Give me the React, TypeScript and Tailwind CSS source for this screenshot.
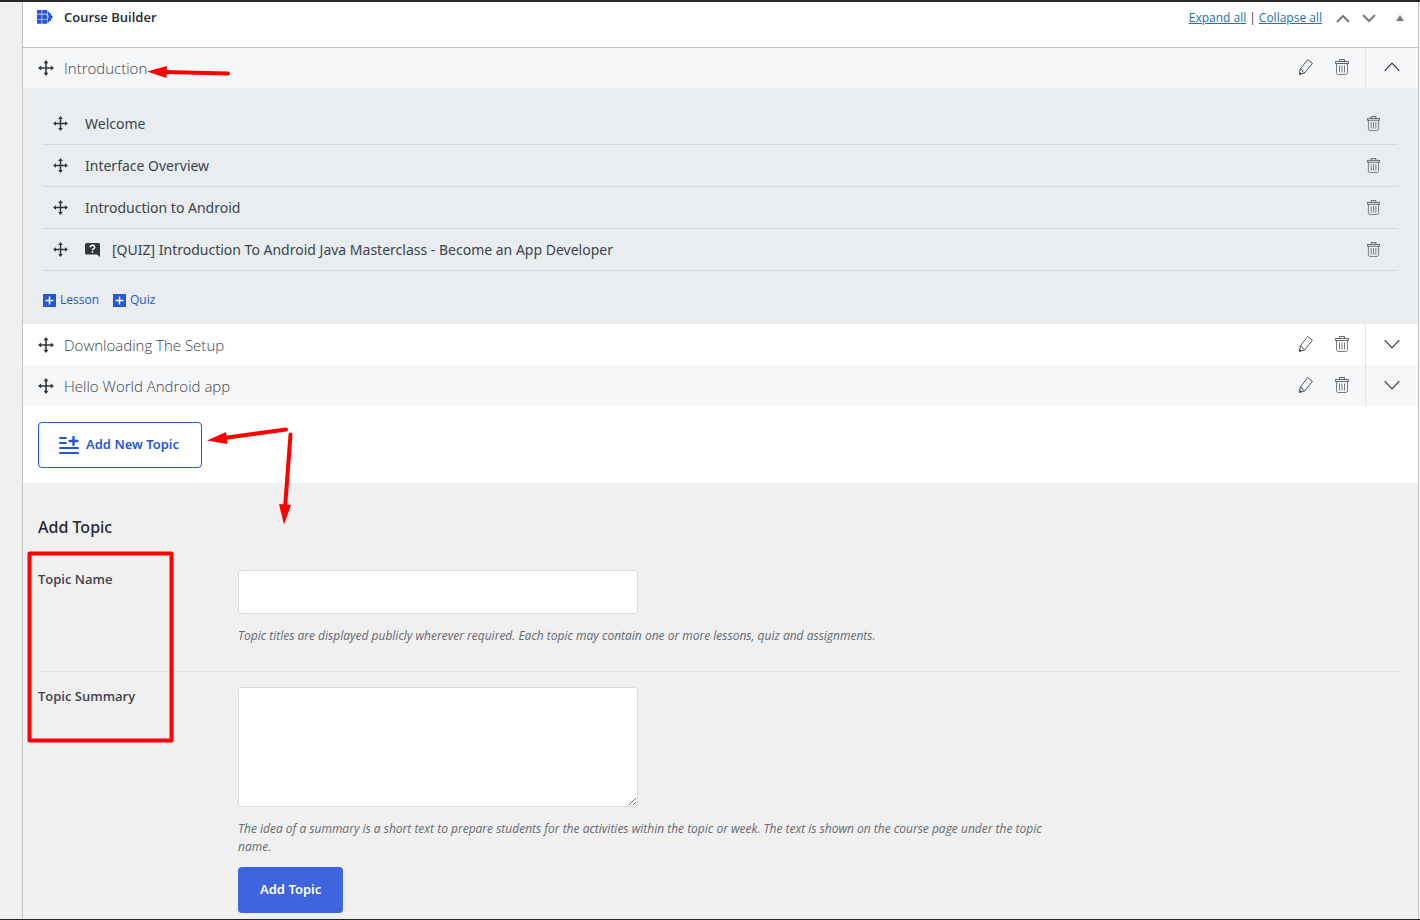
import React from "react";

type IconProps = { className?: string };

function MoveIcon({ className }: IconProps) {
  return (
    <svg viewBox="0 0 16 16" className={className} fill="currentColor" aria-hidden="true">
      <path d="M7.2 2h1.6v12H7.2zM2 7.2h12v1.6H2z" />
      <path d="M8 0l2.5 3.2h-5zM8 16l-2.5-3.2h5zM0 8l3.2-2.5v5zM16 8l-3.2 2.5v-5z" />
    </svg>
  );
}

function TrashIcon({ className }: IconProps) {
  return (
    <svg viewBox="0 0 14 16" className={className} fill="none" stroke="currentColor" aria-hidden="true">
      <path d="M4.5 2.5v-2h5v2" strokeWidth="0.8" />
      <path d="M0.5 2.5h13v2H0.5z" strokeWidth="0.8" />
      <path d="M1.5 4.5v9.2c0 1.1.7 1.8 1.8 1.8h7.4c1.1 0 1.8-.7 1.8-1.8V4.5" strokeWidth="0.7" />
      <path d="M4.5 6.5v7M7 6.5v7M9.5 6.5v7" strokeWidth="0.7" />
    </svg>
  );
}

function PencilIcon({ className }: IconProps) {
  return (
    <svg viewBox="0 0 14 16" className={className} fill="none" stroke="currentColor" strokeLinejoin="round" aria-hidden="true">
      <path d="M8.6.6l4.8 3.6-7.6 9.7L.6 15.4l.5-5.1z" strokeWidth="0.9" />
      <path d="M1.1 10.3l2.1.4.4 1.8 2.2 1.4" strokeWidth="0.8" />
      <path d="M.5 13.3l2 1.5-1.9.7z" fill="currentColor" strokeWidth="0.4" />
    </svg>
  );
}

function ChevronIcon({ className }: IconProps) {
  return (
    <svg viewBox="0 0 16 10" className={className} fill="none" stroke="currentColor" strokeWidth="1.3" aria-hidden="true">
      <path d="M.7 8.9L8 1.1l7.3 7.8" />
    </svg>
  );
}

function BuilderIcon() {
  return (
    <svg viewBox="0 0 16 14" className="h-3.5 w-4 shrink-0 text-[#2456d6]" fill="currentColor" aria-hidden="true">
      <path d="M0 0h4.600v3.700H0zM5.200 0H10v3.700H5.200zM0 4.400h4.600v5H0zM5.200 4.400h4.600v5H5.200zM0 10.100h4.600v3.700H0zM5.200 10.100H10v3.700H5.200z" />
      <path d="M10.500 1l1.300.6.3 1.500 1.400-.2.700 1.200-.5 1.200 1.800.5v2.400l-1.800.5.5 1.200-.7 1.200-1.400-.2-.3 1.500-1.300.6V9.200a3 3 0 0 0 0-4.600z" />
      <path d="M9.600 5.300a2 2 0 0 1 0 3.400z" />
    </svg>
  );
}

function QuizIcon() {
  return (
    <svg viewBox="0 0 16 14" className="h-3.5 w-4 shrink-0" aria-hidden="true">
      <path d="M1.5 0h12A1.5 1.5 0 0 1 15 1.5V14l-3-2.500H1.500A1.500 1.500 0 0 1 0 10V1.500A1.500 1.500 0 0 1 1.500 0z" fill="#32373c" />
      <path d="M5.300 4.200c0-2.500 4.400-2.500 4.400 0 0 1.500-2.200 1.500-2.200 3" fill="none" stroke="#fff" strokeWidth="1.500" />
      <path d="M6.700 8.200h1.600v1.500H6.700z" fill="#fff" />
    </svg>
  );
}

function PlusIcon() {
  return (
    <svg viewBox="0 0 13 13" className="size-[13px]" aria-hidden="true">
      <path d="M0 0h13v13H0z" fill="#2456d6" />
      <path d="M6.500 2.500v8M2.500 6.500h8" stroke="#fff" strokeWidth="1.500" />
    </svg>
  );
}

function AddTopicIcon() {
  return (
    <svg viewBox="0 0 20 18" className="h-[18px] w-5" fill="none" stroke="currentColor" strokeWidth="2" strokeLinecap="round" aria-hidden="true">
      <path d="M1 2h6M1 7h6M1 12h18M1 17h18" />
      <path d="M14.500 1v8M10.500 5h8" strokeWidth="2.400" />
    </svg>
  );
}

const lessons = [
  { title: "Welcome" },
  { title: "Interface Overview" },
  { title: "Introduction to Android" },
  { title: "[QUIZ] Introduction To Android Java Masterclass - Become an App Developer", quiz: true },
];

function TopicRow({ title, open, shaded }: { title: string; open?: boolean; shaded?: boolean }) {
  return (
    <div className={`flex items-stretch text-[#3c434a] ${open ? "h-10" : "h-[41px]"} ${shaded ? "bg-[#f6f7f9]" : "bg-white"}`}>
      <div className="flex flex-1 items-center gap-2.5 pl-[15px]">
        <MoveIcon className="size-4 text-[#32373c]" />
        <h3 className="pt-px text-[15px] font-light">{title}</h3>
      </div>
      <div className="flex items-center gap-[22px] pr-4 pb-0.5">
        <button type="button" aria-label={`Edit ${title}`}>
          <PencilIcon className="h-4 w-3.5" />
        </button>
        <button type="button" aria-label={`Delete ${title}`}>
          <TrashIcon className="h-4 w-3.5" />
        </button>
      </div>
      <button
        type="button"
        aria-label={`Toggle ${title}`}
        className="flex w-[53px] items-center justify-center border-l border-[#e1e3e6] pb-0.5"
      >
        <ChevronIcon className={open ? "h-2.5 w-4" : "h-2.5 w-4 rotate-180"} />
      </button>
    </div>
  );
}

function Annotations() {
  return (
    <svg className="pointer-events-none absolute top-0 left-0 h-[760px] w-[320px]" viewBox="0 2 320 760" aria-hidden="true">
      <g fill="none" stroke="#f00" strokeWidth="4" strokeLinecap="round">
        <path d="M164 72l64 1.500" />
        <path d="M224 438l62-8.500" />
        <path d="M290.500 434.500L285 508" />
        <rect x="29.500" y="553.500" width="142" height="187" strokeLinejoin="round" />
      </g>
      <path d="M147 71.500l20-5.500-.5 12z" fill="#f00" />
      <path d="M207 440.500l19-8.500 1.500 12z" fill="#f00" />
      <path d="M284 524.500l-5-20.500 12 1z" fill="#f00" />
    </svg>
  );
}

export default function App() {
  return (
    <div className="relative min-h-screen border-t-2 border-b border-[#23282d] bg-[#f0f0f0] pr-px pl-[22px] font-['Open_Sans','Noto_Sans',sans-serif] text-[#3c434a]">
      <main className="min-h-[917px] border-x border-[#c3c4c7]">
        <header className="flex h-[46px] items-start justify-between border-b border-[#c3c4c7] bg-white px-[14px] pt-[5px]">
          <div className="flex items-center gap-[11px]">
            <BuilderIcon />
            <h1 className="text-[13px] leading-5 font-semibold text-[#23282d]">Course Builder</h1>
          </div>
          <div className="flex items-center text-xs leading-[22px]">
            <a href="#expand" className="text-[#2271b1] underline">Expand all</a>
            <span className="px-[3px]">|</span>
            <a href="#collapse" className="text-[#2271b1] underline">Collapse all</a>
            <button type="button" aria-label="Move up" className="ml-3.5 text-[#787c82]">
              <svg viewBox="0 0 14 9" className="h-[9px] w-3.5" fill="none" stroke="currentColor" strokeWidth="2"><path d="M1 8l6-6 6 6" /></svg>
            </button>
            <button type="button" aria-label="Move down" className="ml-3 text-[#787c82]">
              <svg viewBox="0 0 14 9" className="h-[9px] w-3.5" fill="none" stroke="currentColor" strokeWidth="2"><path d="M1 1l6 6 6-6" /></svg>
            </button>
            <button type="button" aria-label="Toggle panel" className="ml-5 text-[#787c82]">
              <svg viewBox="0 0 8 6" className="h-1.5 w-2" fill="currentColor"><path d="M4 0l4 6H0z" /></svg>
            </button>
          </div>
        </header>

        <TopicRow title="Introduction" open shaded />
        <section className="bg-[#e9edf0] px-5 pt-[15px] pb-3.5">
          <ul>
            {lessons.map((lesson) => (
              <li key={lesson.title} className="flex h-[42px] items-center border-b border-[#d5d8dc] pr-[18px] pl-2.5">
                <MoveIcon className="size-[15px] shrink-0 text-[#32373c]" />
                <div className="flex flex-1 items-center gap-[11px] pl-[17px] font-['Noto_Sans',sans-serif] text-[14px]">
                  {lesson.quiz && <QuizIcon />}
                  <span>{lesson.title}</span>
                </div>
                <button type="button" aria-label={`Delete ${lesson.title}`}>
                  <TrashIcon className="h-[15px] w-[13px]" />
                </button>
              </li>
            ))}
          </ul>
          <div className="flex gap-3.5 pt-[19px] text-xs leading-5 text-[#2456d6]">
            <button type="button" className="flex items-center gap-1"><PlusIcon />Lesson</button>
            <button type="button" className="flex items-center gap-1"><PlusIcon />Quiz</button>
          </div>
        </section>
        <TopicRow title="Downloading The Setup" />
        <TopicRow title="Hello World Android app" shaded />

        <div className="bg-white px-[15px] pt-4 pb-[15px]">
          <button
            type="button"
            className="flex h-[46px] items-center gap-[7px] rounded-[4px] border border-[#2456d6] pr-[22px] pl-5 font-['Noto_Sans',sans-serif] text-[13px] font-semibold text-[#2456d6]"
          >
            <AddTopicIcon />
            Add New Topic
          </button>
        </div>

        <form className="px-[15px] pt-8" onSubmit={(e) => e.preventDefault()}>
          <h2 className="font-['Noto_Sans',sans-serif] text-base leading-6 font-medium text-[#23282d]">Add Topic</h2>
          <div className="mt-4 flex border-b border-[#e2e4e7] pt-[15px] pb-[26px]">
            <label htmlFor="topic-name" className="w-[200px] shrink-0 text-[13px] leading-[18px] font-semibold">Topic Name</label>
            <div className="max-w-[830px] flex-1">
              <input id="topic-name" type="text" className="block h-11 w-[400px] rounded-[3px] border border-[#dcdcde] bg-white px-3 text-sm" />
              <p className="mt-[13px] text-[12px] leading-[18px] text-[#646970] italic">
                Topic titles are displayed publicly wherever required. Each topic may contain one or more lessons, quiz and assignments.
              </p>
            </div>
          </div>
          <div className="flex pt-[15px]">
            <label htmlFor="topic-summary" className="w-[200px] shrink-0 text-[13px] leading-[18px] font-semibold">Topic Summary</label>
            <div className="max-w-[830px] flex-1">
              <textarea id="topic-summary" className="block h-[120px] w-[400px] rounded-[3px] border border-[#dcdcde] bg-white p-3 text-sm" />
              <p className="mt-[13px] text-[12px] leading-[18px] text-[#646970] italic">
                The idea of a summary is a short text to prepare students for the activities within the topic or week. The text is shown on the course page under the topic name.
              </p>
              <button type="submit" className="mt-[11px] h-[46px] rounded-[4px] bg-[#3e64de] px-[22px] font-['Noto_Sans',sans-serif] text-[13px] font-semibold text-white">
                Add Topic
              </button>
            </div>
          </div>
        </form>
      </main>
      <Annotations />
    </div>
  );
}
